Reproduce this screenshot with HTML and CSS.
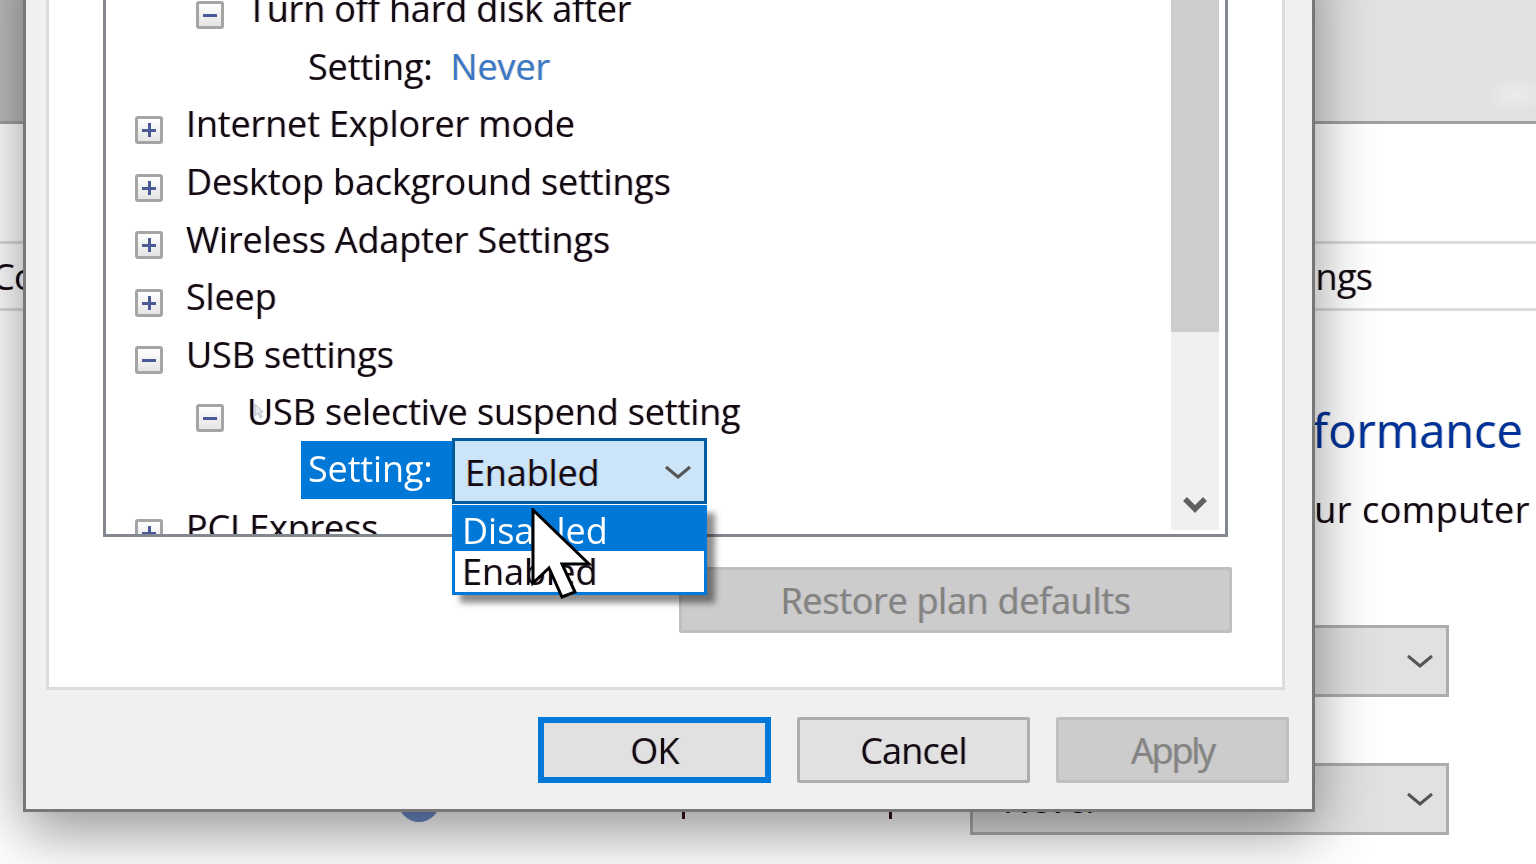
FILE: index.html
```html
<!DOCTYPE html>
<html lang="en">
<head>
    <meta charset="UTF-8">
    <title>Power Options - Advanced settings</title>
    <link rel="stylesheet" href="styles.css">
</head>
<body>
    <!-- window behind the dialog -->
    <div class="back-window">
        <div class="back-header"></div>
        <div class="back-tabs">
            <span>Control Panel</span>
            <span>Change settings</span>
        </div>
        <div class="back-title">Performance</div>
        <div class="back-text">your computer</div>
        <div class="back-select back-select-one">
            <svg class="chev" viewBox="0 0 28 16"><path d="M2 3 L14 13 L26 3" /></svg>
        </div>
        <div class="back-select back-select-two">
            <span>Never</span>
            <svg class="chev" viewBox="0 0 28 16"><path d="M2 3 L14 13 L26 3" /></svg>
        </div>
    </div>
    <div class="back-dot"></div>
    <div class="back-tick back-tick-one"></div>
    <div class="back-tick back-tick-two"></div>

    <div class="dialog">
        <div class="panel">
            <div class="tree">
                <div class="tree-view">
                    <div class="row lvl1"><span class="exp minus"></span><span>Turn off hard disk after</span></div>
                    <div class="row lvl2">Setting:<span class="value">Never</span></div>
                    <div class="row lvl0"><span class="exp plus"></span><span>Internet Explorer mode</span></div>
                    <div class="row lvl0"><span class="exp plus"></span><span>Desktop background settings</span></div>
                    <div class="row lvl0"><span class="exp plus"></span><span>Wireless Adapter Settings</span></div>
                    <div class="row lvl0"><span class="exp plus"></span><span>Sleep</span></div>
                    <div class="row lvl0"><span class="exp minus"></span><span>USB settings</span></div>
                    <div class="row lvl1"><span class="exp minus"></span><span>USB selective suspend setting</span></div>
                    <div class="row row-edit">
                        <span class="edit-label">Setting:</span>
                        <div class="combo">
                            <span>Enabled</span>
                            <svg class="chev" viewBox="0 0 28 16"><path d="M2 3 L14 13 L26 3" /></svg>
                        </div>
                    </div>
                    <div class="row lvl0"><span class="exp plus"></span><span>PCI Express</span></div>
                </div>
                <div class="scrollbar">
                    <div class="thumb"></div>
                    <svg class="scroll-down" viewBox="0 0 24 18"><path d="M2 3 L12 13 L22 3" /></svg>
                </div>
                <div class="combo-list">
                    <div class="combo-item selected">Disabled</div>
                    <div class="combo-item">Enabled</div>
                </div>
            </div>
            <div class="restore-row">
                <button class="btn disabled restore">Restore plan defaults</button>
            </div>
        </div>
        <div class="buttons">
            <button class="btn default">OK</button>
            <button class="btn">Cancel</button>
            <button class="btn disabled apply">Apply</button>
        </div>
    </div>

    <svg class="ghost" viewBox="0 0 10 16"><path d="M1 1 L1 13 L4 10 L6 15 L8 14 L6 9 L9 9 Z" /></svg>
    <svg class="cursor" viewBox="0 0 62 92">
        <path d="M2 2 L2 75 L18 60 L31 89 L44 84 L31 56 L58 56 Z" />
    </svg>
</body>
</html>
```
FILE: styles.css
```css
* {
    margin: 0;
    padding: 0;
    box-sizing: border-box;
}

html, body {
    width: 1536px;
    height: 864px;
    overflow: hidden;
}

body {
    position: relative;
    background: #fff;
    font-family: "Open Sans", "Noto Sans", sans-serif;
    font-size: 36px;
    color: #140a14;
    text-shadow: -1px 0 rgba(230, 150, 40, 0.3), 1px 0 rgba(40, 110, 220, 0.3);
    filter: blur(0.5px);
}

/* window behind */
.back-window {
    position: absolute;
    inset: 0;
}

.back-header {
    height: 124px;
    background:
        radial-gradient(ellipse 30px 18px at 1515px 95px, #ececec, transparent),
        linear-gradient(90deg, #bcbcbc 40px, #e2e2e2 40px);
    border-bottom: 3px solid #a0a0a0;
}

.back-tabs {
    margin-top: 117px;
    height: 70px;
    border-top: 3px solid #dcdcdc;
    border-bottom: 3px solid #dcdcdc;
    display: flex;
    justify-content: space-between;
    align-items: center;
    padding-right: 164px;
    margin-left: -8px;
    letter-spacing: -0.8px;
}

.back-title {
    position: absolute;
    top: 398px;
    right: 13px;
    font-size: 47px;
    color: #003399;
}

.back-text {
    position: absolute;
    top: 485px;
    right: 6px;
    letter-spacing: 0.5px;
}

.back-select {
    position: absolute;
    right: 87px;
    background: #e1e1e1;
    border: 3px solid #adadad;
    display: flex;
    align-items: center;
    justify-content: flex-end;
    padding-right: 12px;
    letter-spacing: -0.8px;
}

.back-select-one {
    top: 625px;
    width: 300px;
    height: 72px;
}

.back-select-two {
    top: 763px;
    width: 479px;
    height: 72px;
    justify-content: space-between;
    padding-left: 30px;
}

.back-dot {
    position: absolute;
    left: 398px;
    top: 780px;
    width: 42px;
    height: 42px;
    border-radius: 50%;
    background: #6d8dc8;
}

.back-tick {
    position: absolute;
    top: 800px;
    width: 3px;
    height: 19px;
    background: #30101c;
}

.back-tick-one { left: 682px; }
.back-tick-two { left: 889px; }

.chev {
    width: 28px;
    height: 16px;
    flex: none;
}

.chev path {
    fill: none;
    stroke: #555;
    stroke-width: 3;
}

/* dialog */
.dialog {
    position: absolute;
    left: 23px;
    top: -60px;
    width: 1292px;
    height: 872px;
    background: #f0f0f0;
    border: 3px solid #777;
    border-top: none;
    padding: 20px 23px 26px 20px;
    display: flex;
    flex-direction: column;
    box-shadow: 0 20px 56px rgba(0, 0, 0, 0.42);
}

.panel {
    flex: 1;
    min-height: 0;
    margin-right: 4px;
    background: #fff;
    border: 3px solid #dcdcdc;
    border-top: none;
    padding: 0 54px 54px 54px;
    display: flex;
    flex-direction: column;
}

.tree {
    position: relative;
    flex: 1;
    display: flex;
    border: 3px solid #828790;
    border-top: none;
    min-height: 0;
}

.tree-view {
    flex: 1;
    overflow: hidden;
    padding-top: 20px;
    letter-spacing: -0.15px;
}

.row {
    height: 57.6px;
    display: flex;
    align-items: center;
    white-space: nowrap;
}

.lvl0 { padding-left: 29px; }
.lvl1 { padding-left: 90px; }
.lvl2 { padding-left: 202px; }

.exp {
    position: relative;
    width: 28px;
    height: 28px;
    margin-right: 23px;
    margin-top: 12px;
    flex: none;
    border: 3px solid #a5a5a5;
    border-radius: 3px;
    background: linear-gradient(#ffffff, #e4e4e4);
}

.exp::before,
.exp.plus::after {
    content: "";
    position: absolute;
    background: #4a5a96;
}

.exp::before {
    left: 4px;
    right: 4px;
    top: 10px;
    height: 3px;
}

.exp.plus::after {
    top: 4px;
    bottom: 4px;
    left: 10px;
    width: 3px;
}

.value {
    margin-left: 18px;
    color: #3a78c8;
}

.row-edit {
    padding-left: 195px;
    align-items: flex-start;
}

.edit-label {
    height: 58px;
    width: 151px;
    padding-left: 7px;
    background: #0078d7;
    color: #fff;
    text-shadow: none;
    line-height: 56px;
}

.combo {
    width: 255px;
    height: 66px;
    margin-top: -3px;
    border: 3px solid #005a9e;
    background: #cce4f7;
    display: flex;
    align-items: center;
    justify-content: space-between;
    padding: 3px 12px 0 10px;
    position: relative;
}

.scrollbar {
    position: relative;
    width: 48px;
    margin-right: 6px;
    margin-bottom: 4px;
    background: #f0f0f0;
}

.thumb {
    height: 372px;
    background: #cdcdcd;
}

.scroll-down {
    position: absolute;
    left: 12px;
    bottom: 16px;
    width: 24px;
    height: 18px;
}

.scroll-down path {
    fill: none;
    stroke: #606060;
    stroke-width: 5.5;
}

.combo-list {
    position: absolute;
    left: 346px;
    top: 545px;
    width: 255px;
    height: 90px;
    background: #fff;
    border: 3px solid #0078d7;
    box-shadow: 8px 8px 6px rgba(0, 0, 0, 0.45);
    z-index: 2;
}

.combo-item {
    height: 42px;
    line-height: 42px;
    padding-left: 7px;
}

.combo-item.selected {
    height: 43px;
    line-height: 46px;
    background: #0078d7;
    color: #fff;
    text-shadow: none;
}

.restore-row {
    display: flex;
    justify-content: flex-end;
    margin-top: 30px;
    margin-right: -4px;
}

.btn {
    width: 233px;
    height: 66px;
    background: #e1e1e1;
    border: 3px solid #adadad;
    border-radius: 2px;
    font-family: inherit;
    font-size: 36px;
    letter-spacing: -0.8px;
    color: #140a14;
    text-shadow: inherit;
}

.btn.restore {
    width: 553px;
    letter-spacing: -0.3px;
}

.btn.disabled {
    background: #cccccc;
    border-color: #bfbfbf;
    color: #838383;
}

.btn.apply {
    letter-spacing: -2.2px;
}

.btn.default {
    border: 6px solid #0078d7;
    border-radius: 0;
}

.buttons {
    display: flex;
    justify-content: flex-end;
    gap: 26px;
    margin-top: 27px;
}

.ghost {
    position: absolute;
    left: 254px;
    top: 403px;
    width: 10px;
    height: 16px;
}

.ghost path {
    fill: #e4e8ee;
    stroke: #b4bcc8;
    stroke-width: 1;
}

.cursor {
    position: absolute;
    left: 531px;
    top: 508px;
    width: 62px;
    height: 92px;
    z-index: 5;
}

.cursor path {
    fill: #fff;
    stroke: #000;
    stroke-width: 3;
}
```
